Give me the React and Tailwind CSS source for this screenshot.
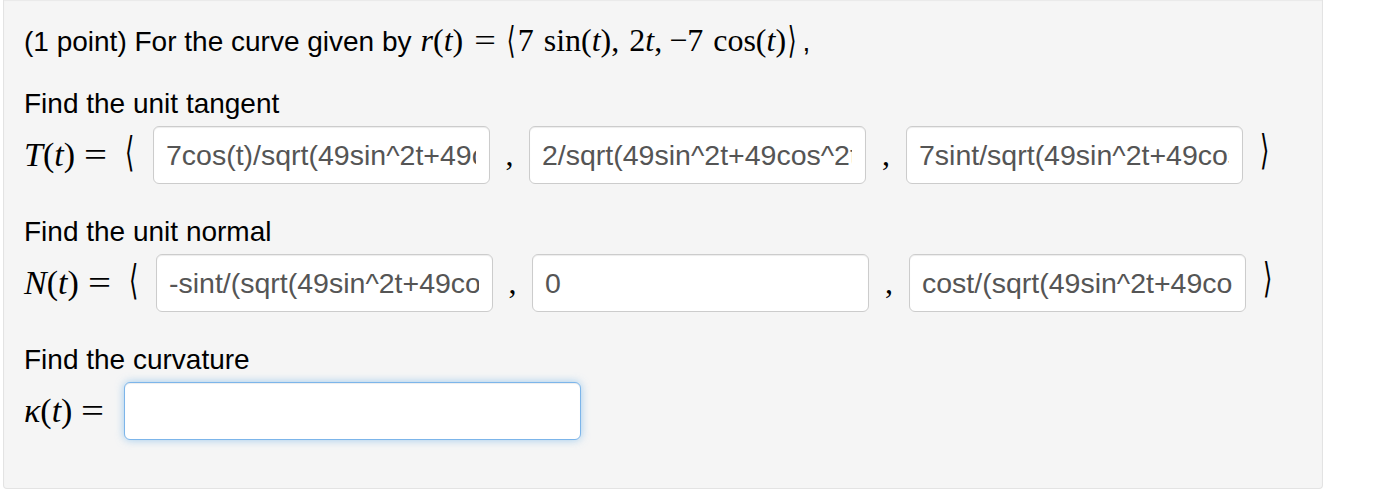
import React from "react";

const serif = { fontFamily: '"Liberation Serif", "DejaVu Serif", serif' };
const brk = { fontFamily: '"DejaVu Serif", "DejaVu Sans", serif' };

function V({ children }) {
  return <span className="italic">{children}</span>;
}

function Field({ value, className = "", focus = false }) {
  return (
    <input
      readOnly
      value={value}
      className={
        "flex-none h-[58px] rounded-[6px] bg-white pl-[12px] pr-[13px] text-[28.5px] text-[#555] outline-none " +
        (focus
          ? "border border-[#7cb5ea] shadow-[0_0_8px_rgba(102,175,233,0.6),inset_0_1px_1px_rgba(0,0,0,0.075)] "
          : "border border-[#cccccc] shadow-[inset_0_1px_1px_rgba(0,0,0,0.075)] ") +
        className
      }
      style={{ fontFamily: '"Liberation Sans", Arial, sans-serif' }}
    />
  );
}

function Sep({ w = 39 }) {
  return (
    <div
      className={
        "flex-none self-stretch flex justify-center items-end pb-[14px] text-[32px] leading-none text-black " +
        (w === 40 ? "w-[40px]" : "w-[39px]")
      }
      style={serif}
    >
      ,
    </div>
  );
}

function RowPrefix({ letter, w }) {
  return (
    <div className={"flex-none flex items-center text-[34px] whitespace-nowrap leading-none " + w} style={serif}>
      <span>
        <V>{letter}</V>(<V>t</V>)
      </span>
      <span className="ml-[11px] inline-block scale-x-[1.2]">=</span>
      <span className="ml-[18px] inline-block text-[34px] scale-x-[0.7] scale-y-[1.2] -mt-[6px]" style={brk}>
        ⟨
      </span>
    </div>
  );
}

function Close() {
  return (
    <div className="ml-[15px] inline-block text-[34px] leading-none scale-x-[0.7] scale-y-[1.2] -mt-[10px]" style={brk}>
      ⟩
    </div>
  );
}

export default function App() {
  return (
    <div className="w-[1376px] h-[502px] bg-white" style={{ fontFamily: '"Liberation Sans", Arial, sans-serif' }}>
      <div className="ml-[3px] w-[1320px] h-[489px] bg-[#f5f5f5] border border-t-0 border-[#e3e3e3] rounded-b-[4px] pl-[20px] pt-[20px] text-black shadow-[inset_0_1px_1px_rgba(0,0,0,0.05)]">
        {/* line 1 */}
        <div className="h-[40px] leading-[40px] text-[28px] whitespace-nowrap flex items-baseline">
          <span>(1 point) For the curve given by</span>
          <span style={serif} className="ml-[9px] text-[32px] leading-[40px] whitespace-nowrap">
            <V>r</V>(<V>t</V>)
            <span className="ml-[13px] inline-block scale-x-[1.2]">=</span>
            <span className="ml-[11px] inline-block text-[32px] scale-x-[0.7] scale-y-[1.15]" style={brk}>⟨</span>
            <span>7</span>
            <span className="ml-[10px]">sin</span>(<V>t</V>),
            <span className="ml-[10px]">2</span>
            <V>t</V>,
            <span className="ml-[7px]">−7</span>
            <span className="ml-[10px]">cos</span>(<V>t</V>)
            <span className="inline-block text-[32px] scale-x-[0.7] scale-y-[1.15]" style={brk}>⟩</span>
          </span>
          <span className="ml-[4px]">,</span>
        </div>

        {/* tangent */}
        <div className="mt-[24px] h-[40px] leading-[40px] text-[28px]">Find the unit tangent</div>
        <div className="mt-[2px] h-[58px] flex items-center">
          <RowPrefix letter="T" w="w-[129px]" />
          <Field value="7cos(t)/sqrt(49sin^2t+49cos^2t+4)" className="w-[337px]" />
          <Sep />
          <Field value="2/sqrt(49sin^2t+49cos^2t+4)" className="w-[337px]" />
          <Sep w={40} />
          <Field value="7sint/sqrt(49sin^2t+49cos^2t+4)" className="w-[337px]" />
          <Close />
        </div>

        {/* normal */}
        <div className="mt-[28px] h-[40px] leading-[40px] text-[28px]">Find the unit normal</div>
        <div className="mt-[2px] h-[58px] flex items-center">
          <RowPrefix letter="N" w="w-[132px]" />
          <Field value="-sint/(sqrt(49sin^2t+49cos^2t))" className="w-[337px]" />
          <Sep />
          <Field value="0" className="w-[337px]" />
          <Sep w={40} />
          <Field value="cost/(sqrt(49sin^2t+49cos^2t))" className="w-[337px]" />
          <Close />
        </div>

        {/* curvature */}
        <div className="mt-[28px] h-[40px] leading-[40px] text-[28px]">Find the curvature</div>
        <div className="mt-[2px] h-[58px] flex items-center">
          <div className="flex-none w-[100px] flex items-center text-[34px] whitespace-nowrap leading-none" style={serif}>
            <span>
              <V>κ</V>(<V>t</V>)
            </span>
            <span className="ml-[11px] inline-block scale-x-[1.2]">=</span>
          </div>
          <Field value="" focus className="w-[457px]" />
        </div>
      </div>
    </div>
  );
}
